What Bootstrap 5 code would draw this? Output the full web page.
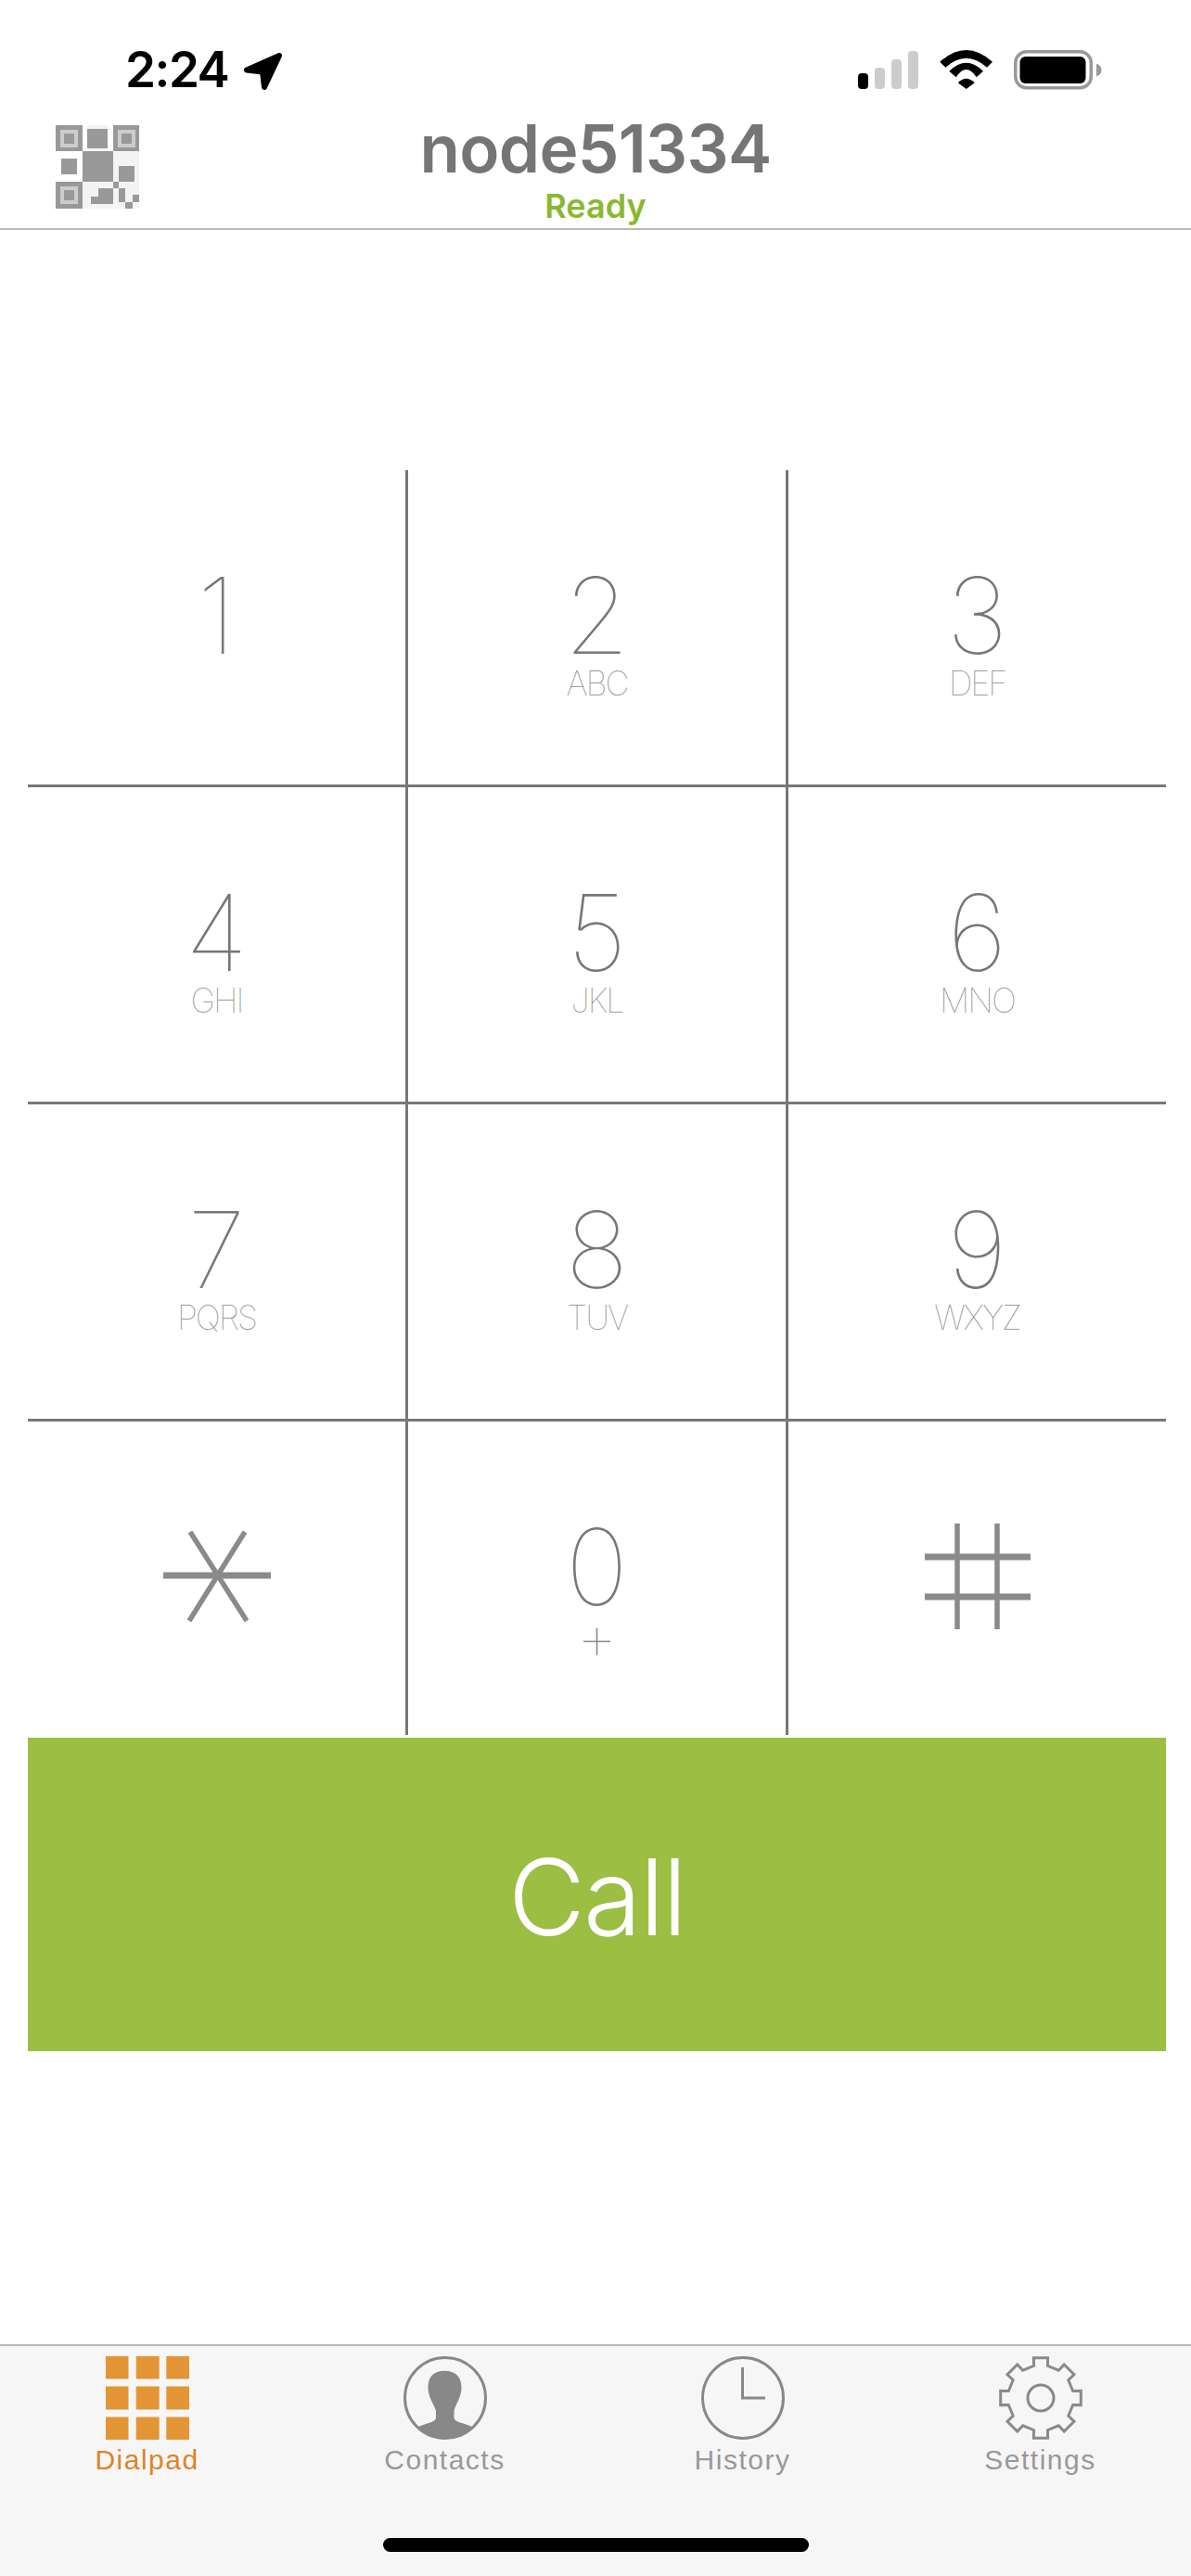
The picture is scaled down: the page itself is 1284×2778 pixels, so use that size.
<!DOCTYPE html>
<html lang="en">
<head>
  <meta charset="UTF-8" />
  <title>Dialpad</title>
  <meta name="viewport" content="width=device-width, initial-scale=1.0"/>
  <link href="https://cdn.jsdelivr.net/npm/bootstrap@5.3.3/dist/css/bootstrap.min.css" rel="stylesheet">
  <style>
    body { background: #fff; font-family: "Liberation Sans", Arial, sans-serif; }
    .phone { width: 1284px; height: 2778px; overflow: hidden; }

    /* status bar */
    .status-bar { height: 120px; padding: 54px 94px 0 135px; }
    .clock-time { font-family: Inter, "Liberation Sans", sans-serif; font-size: 53px; line-height: 42px; font-weight: 600; color: #000; letter-spacing: -1.500px; }

    /* header */
    .top-head { height: 128px; border-bottom: 2px solid #b9b9b9; display: grid; grid-template-columns: 1fr auto 1fr; padding-left: 60px; padding-right: 60px; }
    .qr-btn { margin-top: 15px; width: 90px; height: 90px; }
    .qr-btn svg { filter: blur(.6px); }
    .peer-name { font-family: Inter, "Liberation Sans", sans-serif; font-size: 71px; line-height: 72px; font-weight: 600; color: #757575; margin-top: 4px; letter-spacing: -.7px; }
    .peer-state { font-family: Inter, "Liberation Sans", sans-serif; font-size: 36px; line-height: 36px; font-weight: 600; color: #8ab82f; margin-top: 8px; }

    /* keypad */
    .number-display { height: 259px; }
    .keypad { display: grid; grid-template-columns: 410px 410px 407px; grid-template-rows: 342px 342px 342px 338px; margin: 0 27px 0 30px; }
    .key-cell { display: flex; flex-direction: column; align-items: center; padding-top: 102px; color: #777; }
    .key-cell.line-r { border-right: 3px solid #777; }
    .key-cell.line-b { border-bottom: 3px solid #777; }
    .key-cell.glyph-cell { justify-content: center; padding: 0 0 4px; }
    .key-digit { font-family: Inter, "Liberation Sans", sans-serif; font-weight: 100; font-size: 114px; line-height: 110px; }
    .key-sub { font-family: Inter, "Liberation Sans", sans-serif; font-weight: 100; font-size: 36px; line-height: 36px; color: #8a8a8a; letter-spacing: -2px; }
    .key-plus { font-family: Inter, "Liberation Sans", sans-serif; font-weight: 100; font-size: 70px; line-height: 40px; color: #8a8a8a; }
    .call-btn { display: block; width: 1227px; height: 338px; margin: 3px 0 0 30px; background: #9bbe43; border: 0; border-radius: 0; color: #fff; font-family: Inter, "Liberation Sans", sans-serif; font-weight: 300; font-size: 114px; line-height: 1; padding: 5px 0 0; letter-spacing: -2px; }
    .call-btn:hover, .call-btn:active { background: #9bbe43 !important; color: #fff !important; }

    /* tab bar */
    .tab-bar { height: 250px; background: #f6f6f6; border-top: 2px solid #b9b9b9; }
    .tab-row { margin-left: -2px; }
    .tab-item { width: 321px; padding-top: 11px; color: #999; font-size: 30px; line-height: 36px; letter-spacing: 1.500px; text-decoration: none; }
    .tab-item.is-on { color: #e08328; }
    .tab-item svg { display: block; margin-bottom: 4px; }
    .dial-grid { filter: blur(.4px); }
    .home-bar { width: 459px; height: 15px; border-radius: 8px; background: #000; margin: 66px auto 0; }
  </style>
</head>
<body>
<div class="phone d-flex flex-column">

  <div class="status-bar d-flex justify-content-between align-items-start">
    <div class="d-flex align-items-start gap-3">
      <span class="clock-time">2:24</span>
      <svg width="44" height="44" viewBox="0 0 44 44"><path d="M39 6 4 21.500l17 2L23 40z" fill="#000" stroke="#000" stroke-width="6" stroke-linejoin="round"/></svg>
    </div>
    <svg width="265" height="44" viewBox="0 0 265 44">
      <rect x="0" y="25" width="11" height="17" rx="4" fill="#000"/>
      <rect x="18" y="19" width="11" height="23" rx="4" fill="#ccc"/>
      <rect x="36" y="10" width="11" height="32" rx="4" fill="#ccc"/>
      <rect x="54" y="1" width="11" height="41" rx="4" fill="#ccc"/>
      <path d="M88.300 12.700Q116.700-12.700 145 12.700L139 18.700Q116.700-1.300 94.300 18.700z" fill="#000"/>
      <path d="M98.300 22.700Q116.700 4.700 135 22.700L127.700 29.300Q116.700 12.700 105.700 29.300z" fill="#000"/>
      <path d="M107.700 35.300Q116.700 26 125.700 35.300L116.700 42z" fill="#000"/>
      <rect x="169.800" y="1.800" width="81.500" height="39" rx="12" fill="none" stroke="#999" stroke-width="3.500"/>
      <rect x="174.500" y="7" width="71" height="29" rx="6" fill="#000"/>
      <path d="M257 14.500c4 2 5.500 4 5.500 7s-1.500 5-5.500 7z" fill="#999"/>
    </svg>
  </div>

  <div class="top-head">
    <div>
      <button class="qr-btn btn p-0 border-0 d-block" aria-label="QR code">
        <svg width="90" height="90" viewBox="0 0 90 90">
          <rect width="90" height="90" fill="#f4f4f4"/>
          <path d="M29 0h5v28h-5zM56 0h6v28h-6zM0 28h29v33H0z" fill="#fff"/>
          <g fill="#999">
            <rect width="29" height="28"/><rect x="62" width="28" height="28"/><rect y="61" width="29" height="29"/>
            <rect x="34" y="4" width="22" height="21"/><rect x="6" y="36" width="17" height="17"/><rect x="29" y="28" width="33" height="33"/>
            <rect x="68" y="44" width="17" height="17"/><rect x="62" y="61" width="6" height="7"/>
            <path d="M46 68h16v17H38v-8h8zM68 68h7v15h-7zM75 83h8v7h-8zM83 75h7v8h-7z"/>
          </g>
          <g fill="none" stroke="#ccc" stroke-width="4">
            <rect x="7" y="7" width="15" height="15"/><rect x="69" y="7" width="15" height="15"/><rect x="7" y="68" width="15" height="15"/>
          </g>
        </svg>
      </button>
    </div>
    <div class="text-center">
      <div class="peer-name">node51334</div>
      <div class="peer-state">Ready</div>
    </div>
    <div></div>
  </div>

  <div class="number-display"></div>

  <div class="keypad" id="keys">
    <div class="key-cell line-r line-b"><span class="key-digit">1</span></div>
    <div class="key-cell line-r line-b"><span class="key-digit">2</span><span class="key-sub">ABC</span></div>
    <div class="key-cell line-b"><span class="key-digit">3</span><span class="key-sub">DEF</span></div>
    <div class="key-cell line-r line-b"><span class="key-digit">4</span><span class="key-sub">GHI</span></div>
    <div class="key-cell line-r line-b"><span class="key-digit">5</span><span class="key-sub">JKL</span></div>
    <div class="key-cell line-b"><span class="key-digit">6</span><span class="key-sub">MNO</span></div>
    <div class="key-cell line-r line-b"><span class="key-digit">7</span><span class="key-sub">PQRS</span></div>
    <div class="key-cell line-r line-b"><span class="key-digit">8</span><span class="key-sub">TUV</span></div>
    <div class="key-cell line-b"><span class="key-digit">9</span><span class="key-sub">WXYZ</span></div>
    <div class="key-cell line-r glyph-cell">
      <svg width="116" height="98" viewBox="0 0 116 98" stroke="#8a8a8a" fill="none"><path d="M0 48h116" stroke-width="7"/><path d="M29 1l61 96M88 1 28 97" stroke-width="5.500"/></svg>
    </div>
    <div class="key-cell line-r"><span class="key-digit">0</span><span class="key-plus">+</span></div>
    <div class="key-cell glyph-cell">
      <svg width="114" height="114" viewBox="0 0 114 114" stroke="#8a8a8a" fill="none"><path d="M0 36h114M0 79h114" stroke-width="7"/><path d="M35 0v114M78 0v114" stroke-width="5.500"/></svg>
    </div>
  </div>

  <button class="call-btn btn">Call</button>

  <div class="flex-grow-1"></div>

  <div class="tab-bar">
    <div class="d-flex tab-row">
      <a class="tab-item is-on d-flex flex-column align-items-center" href="#">
        <svg class="dial-grid" width="90" height="90" viewBox="0 0 90 90" fill="#e39535">
          <rect width="24.500" height="24.500"/><rect x="32.700" width="25" height="24.500"/><rect x="65.300" width="24.700" height="24.500"/>
          <rect y="32.500" width="24.500" height="25"/><rect x="32.700" y="32.500" width="25" height="25"/><rect x="65.300" y="32.500" width="24.700" height="25"/>
          <rect y="65.500" width="24.500" height="24.500"/><rect x="32.700" y="65.500" width="25" height="24.500"/><rect x="65.300" y="65.500" width="24.700" height="24.500"/>
        </svg>
        Dialpad
      </a>
      <a class="tab-item d-flex flex-column align-items-center" href="#">
        <svg width="90" height="90" viewBox="0 0 90 90">
          <defs><clipPath id="personClip"><circle cx="45" cy="45" r="44"/></clipPath></defs>
          <path clip-path="url(#personClip)" fill="#888" d="M44.500 15.700C56 15.700 62.500 22 62.500 34 62.500 44 56 52 54.500 59V66C54.500 70 60 71 66 73L74 76 90 90H0L16 76 24 73C30 71 35 70 35 66V59C33 52 26.500 44 26.500 34 26.500 22 32 15.700 44.500 15.700z"/>
          <circle cx="45" cy="45" r="43.500" fill="none" stroke="#888" stroke-width="3"/>
        </svg>
        Contacts
      </a>
      <a class="tab-item d-flex flex-column align-items-center" href="#">
        <svg width="90" height="90" viewBox="0 0 90 90" fill="none" stroke="#888">
          <circle cx="45" cy="45" r="43.500" stroke-width="3"/>
          <path d="M44.500 12v33H69" stroke-width="3"/>
        </svg>
        History
      </a>
      <a class="tab-item d-flex flex-column align-items-center" href="#">
        <svg width="90" height="90" viewBox="0 0 90 90" fill="none" stroke="#8a8a8a" stroke-width="3">
          <path id="gearOutline" d=""/>
          <circle cx="45" cy="45" r="14"/>
        </svg>
        Settings
      </a>
    </div>
    <div class="home-bar"></div>
  </div>
</div>

<script src="https://cdn.jsdelivr.net/npm/bootstrap@5.3.3/dist/js/bootstrap.bundle.min.js"></script>
<script>
// gear outline, 8 teeth
let d = "";
for (let i = 0; i < 8; i++) {
  const a = i * 45 - 90;
  [[35.5, -12], [44, -10], [44, 10], [35.5, 12]].forEach(p => {
    const t = (a + p[1]) * Math.PI / 180;
    d += (d ? "L" : "M") + (45 + p[0] * Math.cos(t)).toFixed(1) + " " + (45 + p[0] * Math.sin(t)).toFixed(1);
  });
}
document.getElementById("gearOutline").setAttribute("d", d + "z");
</script>
</body>
</html>
